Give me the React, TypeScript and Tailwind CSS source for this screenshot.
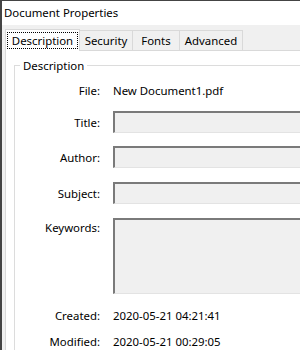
import React from "react";

const tabs = [
  { title: "Description", w: "w-[75px]", active: true },
  { title: "Security", w: "w-[53px]" },
  { title: "Fonts", w: "w-[47px]" },
  { title: "Advanced", w: "w-[63px]" },
];

const Field = ({ tall }: { tall?: boolean }) => (
  <div
    className={`flex-1 bg-[#f0f0f0] border-t-2 border-l-2 border-[#7a7a7a] border-b border-b-[#e3e3e3] ${
      tall ? "h-[76px]" : "h-[22px]"
    }`}
  />
);

const Label = ({ children }: { children: React.ReactNode }) => (
  <div className="w-[86px] shrink-0 text-right pr-[1px]">{children}</div>
);

export default function App() {
  return (
    <div
      className="w-[300px] h-[350px] overflow-hidden bg-[#f0f0f0] border-t border-l-2 border-[#444444] text-[11.4px] text-black flex flex-col"
      style={{ fontFamily: '"Noto Sans", "Segoe UI", sans-serif' }}
    >
      <div className="h-[24px] shrink-0 bg-white pl-[2px] flex items-center">Document Properties</div>

      <div className="flex shrink-0 items-end mt-[3px] ml-[3px] h-[22px] relative z-10">
        {tabs.map((t) =>
          t.active ? (
            <div
              key={t.title}
              className={`${t.w} h-[22px] -mb-[1px] bg-white border border-b-0 border-[#d9d9d9] flex items-center justify-center`}
            >
              <span className="border border-dotted border-black px-[4px] leading-[15px]">{t.title}</span>
            </div>
          ) : (
            <div
              key={t.title}
              className={`${t.w} h-[20px] pt-[1px] border border-l-0 border-b-0 border-[#d9d9d9] flex items-center justify-center`}
            >
              {t.title}
            </div>
          )
        )}
      </div>

      <div className="flex-1 min-h-0 overflow-hidden bg-white border-t border-l border-[#d9d9d9] ml-[3px] pl-[8px] pt-[6px]">
        <fieldset className="border border-[#dcdcdc] border-r-0 border-b-0 pr-0 pb-[20px]">
          <legend className="ml-[5px] px-[3px]">Description</legend>
          <div className="flex flex-col">
            <div className="flex items-center h-[20px] mt-[6px] gap-[12px]">
              <Label>File:</Label>
              <div>New Document1.pdf</div>
            </div>
            <div className="flex items-center mt-[11px] gap-[12px]">
              <Label>Title:</Label>
              <Field />
            </div>
            <div className="flex items-center mt-[13px] gap-[12px]">
              <Label>Author:</Label>
              <Field />
            </div>
            <div className="flex items-center mt-[14px] gap-[12px]">
              <Label>Subject:</Label>
              <Field />
            </div>
            <div className="flex items-start mt-[14px] gap-[12px]">
              <div className="mt-[1px]">
                <Label>Keywords:</Label>
              </div>
              <Field tall />
            </div>
            <div className="flex items-center h-[20px] mt-[11px] gap-[12px]">
              <Label>Created:</Label>
              <div>2020-05-21 04:21:41</div>
            </div>
            <div className="flex items-center h-[20px] mt-[6px] gap-[12px]">
              <Label>Modified:</Label>
              <div>2020-05-21 00:29:05</div>
            </div>
          </div>
        </fieldset>
      </div>
    </div>
  );
}
